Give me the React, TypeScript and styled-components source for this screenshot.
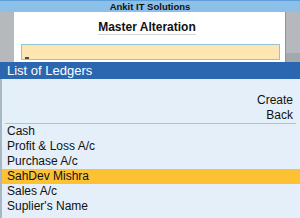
import React from "react";
import styled, { createGlobalStyle } from "styled-components";

const Global = createGlobalStyle`
  html, body { margin: 0; padding: 0; background: #e4eff9; }
  body { font-family: "Liberation Sans", Arial, sans-serif; }
  * { box-sizing: border-box; }
`;

const Screen = styled.div`
  width: 300px;
  height: 218px;
  overflow: hidden;
  display: flex;
  flex-direction: column;
  background: #e4eff9;
`;

const TitleBar = styled.div`
  height: 12px;
  border-top: 1px solid #5f9fd8;
  background: #8dc0e8;
  display: flex;
  align-items: center;
  justify-content: center;
  font-size: 9.5px;
  font-weight: bold;
  color: #111;
  line-height: 11px;
`;

const Middle = styled.div`
  height: 50px;
  display: flex;
`;

const Gutter = styled.div<{ $w?: number }>`
  width: ${(p) => (p.$w ? `${p.$w}px` : "auto")};
  flex: ${(p) => (p.$w ? "none" : "1")};
  background: #b5b9bd;
  display: flex;
  flex-direction: column;
  justify-content: flex-end;
`;

const GutterShade = styled.div`
  height: 9px;
  background: #a3a8ad;
`;

const Divider = styled.div`
  width: 1px;
  background: #8e9398;
`;

const Panel = styled.div`
  width: 271px;
  background: #ffffff;
  padding: 8px 5px 0 7px;
  display: flex;
  flex-direction: column;
`;

const TitleRow = styled.div`
  display: flex;
  justify-content: center;
  padding-right: 7px;
`;

const Title = styled.div`
  font-size: 12px;
  font-weight: bold;
  line-height: 14px;
  color: #111;
  border-bottom: 1px solid #d4d4d4;
`;

const Input = styled.div`
  margin-top: 9px;
  height: 16px;
  border: 1px solid #93c3d4;
  background: #fde6b1;
  position: relative;
`;

const Cursor = styled.span`
  position: absolute;
  left: 3px;
  top: 12px;
  width: 4px;
  height: 2px;
  background: #4a4a4a;
`;

const ListHeader = styled.div`
  height: 17px;
  background: #2b66b1;
  color: #ffffff;
  font-size: 13px;
  line-height: 17px;
  padding-left: 7px;
`;

const ListBody = styled.div`
  flex: 1;
  border-left: 2px solid #a9b6c3;
  padding-top: 14px;
  display: flex;
  flex-direction: column;
`;

const Action = styled.div`
  height: 15px;
  font-size: 12px;
  line-height: 15px;
  text-align: right;
  padding-right: 7px;
  color: #111;
`;

const Separator = styled.div`
  height: 1px;
  margin: 0 4px 0 3px;
  background: #b9c0c7;
`;

const Item = styled.div<{ $active?: boolean }>`
  height: 15px;
  font-size: 12px;
  line-height: 15px;
  padding-left: 5px;
  color: #111;
  background: ${(p) => (p.$active ? "#fdc233" : "transparent")};
`;

const ledgers = [
  "Cash",
  "Profit & Loss A/c",
  "Purchase A/c",
  "SahDev Mishra",
  "Sales A/c",
  "Suplier's Name",
];

export default function App() {
  return (
    <>
      <Global />
      <Screen>
        <TitleBar>Ankit IT Solutions</TitleBar>
        <Middle>
          <Gutter $w={14} />
          <Panel>
            <TitleRow>
              <Title>Master Alteration</Title>
            </TitleRow>
            <Input>
              <Cursor />
            </Input>
          </Panel>
          <Divider />
          <Gutter>
            <GutterShade />
          </Gutter>
        </Middle>
        <ListHeader>List of Ledgers</ListHeader>
        <ListBody>
          <Action>Create</Action>
          <Action>Back</Action>
          <Separator />
          {ledgers.map((l) => (
            <Item key={l} $active={l === "SahDev Mishra"}>
              {l}
            </Item>
          ))}
        </ListBody>
      </Screen>
    </>
  );
}
